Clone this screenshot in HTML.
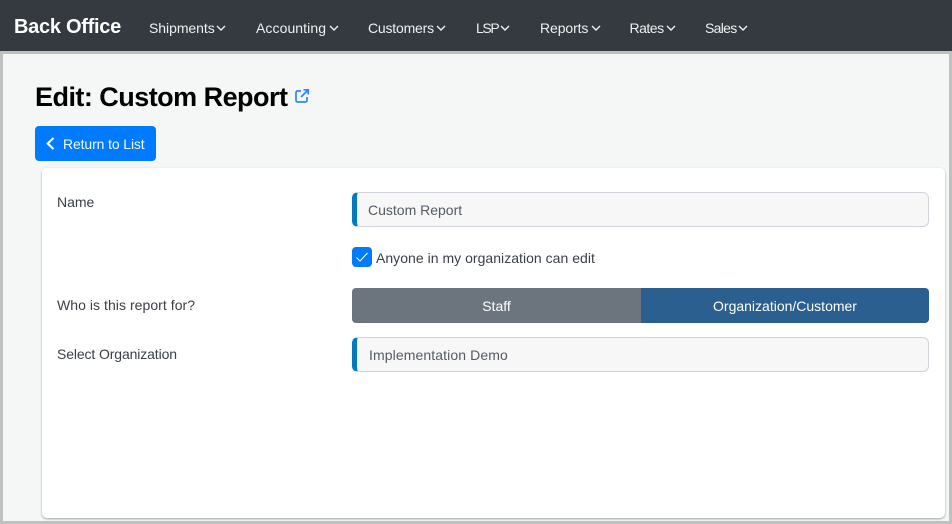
<!DOCTYPE html>
<html lang="en"><head><meta charset="utf-8"><title>Edit: Custom Report</title>
<style>
*{box-sizing:border-box}
html,body{margin:0;padding:0;width:952px;height:524px;overflow:hidden;background:#bfc1c1;font-family:"Liberation Sans",sans-serif}
.a{position:absolute;white-space:nowrap}
.nav{position:absolute;left:0;top:0;width:952px;height:51px;background:#343a40}
.n{color:#eef0f1;font-size:14px;top:20px;line-height:16px}
.c{position:absolute;top:25px}
.main{position:absolute;left:3px;top:54px;width:946px;height:467px;background:#f5f7f7}
.card{position:absolute;left:42px;top:168px;width:903px;height:350px;background:#fff;border-radius:5px;box-shadow:0 1px 2px rgba(0,0,0,.35)}
.inp{position:absolute;left:352px;width:577px;height:35px;background:#f7f7f8;border:1px solid #ced4da;border-left:5px solid #007bbd;border-radius:6px;color:#555b61;font-size:14px;line-height:35px}
.l{color:#3b4046;font-size:14px;line-height:16px}
</style></head><body>
<div class="nav"></div>
<div class="a" style="left:14px;top:16px;color:#fff;font-size:20px;font-weight:700;line-height:23px;letter-spacing:-.28px">Back Office</div>
<div class="a n" style="left:149px;letter-spacing:-.05px">Shipments</div>
<svg class="c" style="left:216px" width="10" height="6" viewBox="0 0 10 6"><path d="M1 1l4 4 4-4" fill="none" stroke="#eef0f1" stroke-width="1.4"/></svg>
<div class="a n" style="left:256px;letter-spacing:.08px">Accounting</div>
<svg class="c" style="left:329px" width="10" height="6" viewBox="0 0 10 6"><path d="M1 1l4 4 4-4" fill="none" stroke="#eef0f1" stroke-width="1.4"/></svg>
<div class="a n" style="left:368px;letter-spacing:-.2px">Customers</div>
<svg class="c" style="left:436px" width="10" height="6" viewBox="0 0 10 6"><path d="M1 1l4 4 4-4" fill="none" stroke="#eef0f1" stroke-width="1.4"/></svg>
<div class="a n" style="left:476px;letter-spacing:-1.4px">LSP</div>
<svg class="c" style="left:500px" width="10" height="6" viewBox="0 0 10 6"><path d="M1 1l4 4 4-4" fill="none" stroke="#eef0f1" stroke-width="1.4"/></svg>
<div class="a n" style="left:540px;letter-spacing:-.1px">Reports</div>
<svg class="c" style="left:591px" width="10" height="6" viewBox="0 0 10 6"><path d="M1 1l4 4 4-4" fill="none" stroke="#eef0f1" stroke-width="1.4"/></svg>
<div class="a n" style="left:629.500px;letter-spacing:-.5px">Rates</div>
<svg class="c" style="left:666px" width="10" height="6" viewBox="0 0 10 6"><path d="M1 1l4 4 4-4" fill="none" stroke="#eef0f1" stroke-width="1.4"/></svg>
<div class="a n" style="left:705px;letter-spacing:-.7px">Sales</div>
<svg class="c" style="left:738px" width="10" height="6" viewBox="0 0 10 6"><path d="M1 1l4 4 4-4" fill="none" stroke="#eef0f1" stroke-width="1.4"/></svg>
<div class="main"></div>
<div class="a" style="left:35px;top:81px;color:#000;font-size:27px;font-weight:700;line-height:32px;letter-spacing:-.53px">Edit: Custom Report</div>
<svg class="a" style="left:294px;top:88px" width="16" height="16" viewBox="0 0 16 16"><path d="M7 3H3.500A1.500 1.500 0 0 0 2 4.500V12.500A1.500 1.500 0 0 0 3.500 14H11.500A1.500 1.500 0 0 0 13 12.500V9M9.500 1.800H14.200V6.500M14 2L7 9" fill="none" stroke="#2b87fb" stroke-width="1.700"/></svg>
<div class="a" style="left:35px;top:126px;width:121px;height:35px;background:#007bff;border-radius:4px"></div>
<svg class="a" style="left:46px;top:137px" width="9" height="13" viewBox="0 0 9 13"><path d="M7.500 1L1.700 6.500l5.800 5.500" fill="none" stroke="#fff" stroke-width="2.200"/></svg>
<div class="a" style="left:63px;top:136px;color:#f4f8ff;font-size:14px;line-height:16px;letter-spacing:-.12px">Return to List</div>
<div class="card"></div>
<div class="a l" style="left:57px;top:194px">Name</div>
<div class="inp" style="top:192px;padding-left:11px">Custom Report</div>
<div class="a" style="left:352px;top:247px;width:20px;height:20px;background:#007bff;border-radius:4px"></div>
<svg class="a" style="left:352px;top:247px" width="20" height="20" viewBox="0 0 20 20"><path d="M4.500 10.500l3.500 3.500 7.500-8" fill="none" stroke="#fff" stroke-width="1.100"/></svg>
<div class="a l" style="left:376px;top:250px;letter-spacing:.03px">Anyone in my organization can edit</div>
<div class="a l" style="left:57px;top:297px;letter-spacing:.05px">Who is this report for?</div>
<div class="a" style="left:352px;top:288px;width:289px;height:35px;background:#6c757d;border-radius:4px 0 0 4px;color:#fff;font-size:14px;line-height:37px;text-align:center">Staff</div>
<div class="a" style="left:641px;top:288px;width:288px;height:35px;background:#2a5f8f;border-radius:0 4px 4px 0;color:#fff;font-size:14px;line-height:37px;text-align:center">Organization/Customer</div>
<div class="a l" style="left:57px;top:346px;letter-spacing:-.12px">Select Organization</div>
<div class="inp" style="top:337px;padding-left:12px;letter-spacing:.1px">Implementation Demo</div>
</body></html>
